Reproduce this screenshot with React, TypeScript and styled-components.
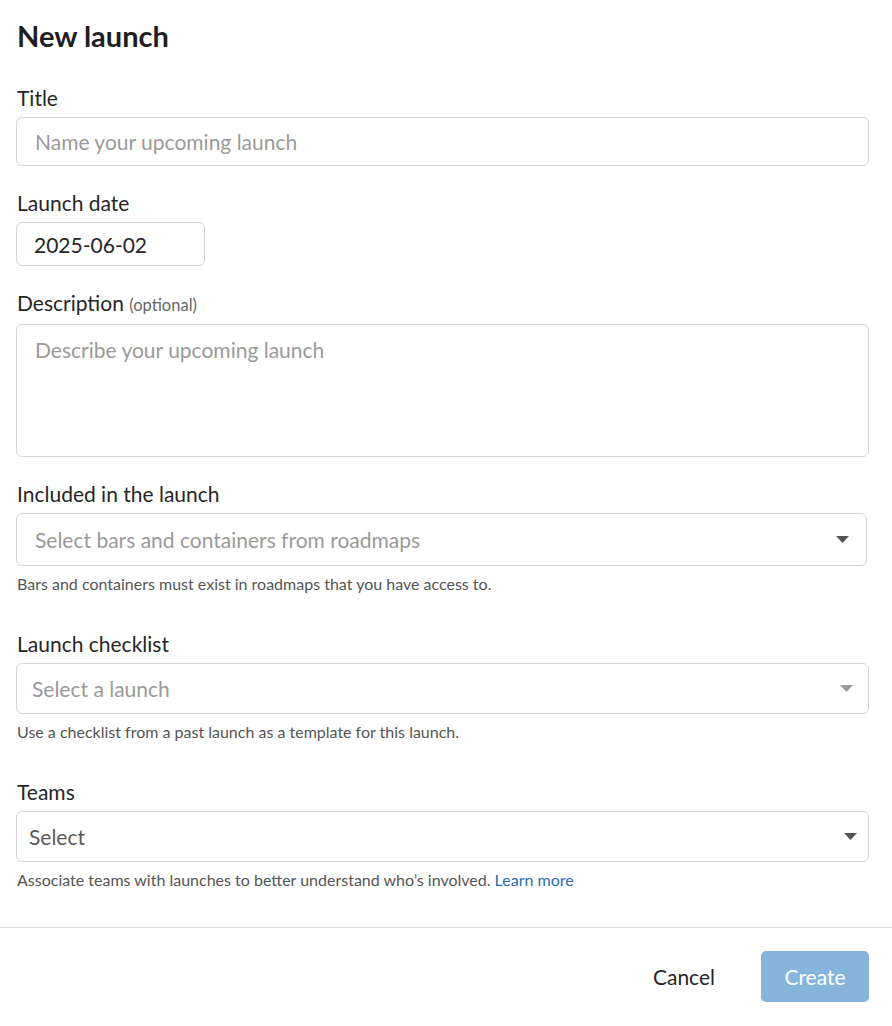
import styled, { createGlobalStyle } from "styled-components"

const GlobalStyle = createGlobalStyle`
  body {
    margin: 0;
    background: #fff;
    font-family: Lato, "Noto Sans", sans-serif;
    color: #262626;
  }
  * { box-sizing: border-box; }
`

function Caret({ light }: { light?: boolean }) {
    return (
        <svg width="13" height="7" viewBox="0 0 13 7">
            <path d="M0 0 L13 0 L6.5 7 Z" fill={light ? '#9a9a9a' : '#555'} />
        </svg>
    )
}

export default function App() {
    return (
        <>
            <GlobalStyle />
            <Page>
                <Form>
                    <Heading>New launch</Heading>
                    <Field>
                        <Label>Title</Label>
                        <TextInput placeholder="Name your upcoming launch" />
                    </Field>
                    <Field>
                        <Label>Launch date</Label>
                        <DateInput defaultValue="2025-06-02" />
                    </Field>
                    <Field>
                        <Label>Description <Optional>(optional)</Optional></Label>
                        <TextArea placeholder="Describe your upcoming launch" />
                    </Field>
                    <Field>
                        <Label>Included in the launch</Label>
                        <Select $height={53} $inset="calc(100% - 2px)" $padLeft={18} $padRight={17}>
                            <Placeholder>Select bars and containers from roadmaps</Placeholder>
                            <Caret />
                        </Select>
                        <Help>Bars and containers must exist in roadmaps that you have access to.</Help>
                    </Field>
                    <Field>
                        <Label>Launch checklist</Label>
                        <Select $height={51} $inset="100%" $padLeft={15} $padRight={15}>
                            <Placeholder>Select a launch</Placeholder>
                            <Caret light />
                        </Select>
                        <Help>Use a checklist from a past launch as a template for this launch.</Help>
                    </Field>
                    <Field>
                        <Label>Teams</Label>
                        <Select $height={51} $inset="100%" $padLeft={12} $padRight={11}>
                            <Placeholder $dark>Select</Placeholder>
                            <Caret />
                        </Select>
                        <Help>Associate teams with launches to better understand who’s involved. <HelpLink href="#">Learn more</HelpLink></Help>
                    </Field>
                </Form>
                <Footer>
                    <CancelButton>Cancel</CancelButton>
                    <CreateButton>Create</CreateButton>
                </Footer>
            </Page>
        </>
    )
}

const Page = styled.div`
    width: 892px;
    min-height: 1026px;
    display: flex;
    flex-direction: column;
`
const Form = styled.div`
    padding: 18px 23px 0 16px;
    display: flex;
    flex-direction: column;
    gap: 25px;
`
const Heading = styled.h1`
    margin: 0 0 7px 1px;
    font-size: 29px;
    font-weight: 700;
    line-height: 36px;
    color: #1f1f1f;
`
const Field = styled.div`
    display: flex;
    flex-direction: column;
`
const Label = styled.label`
    margin: 0 0 7px 1px;
    font-size: 21px;
    line-height: 24px;
    color: #262626;
`
const Optional = styled.span`
    font-size: 16.5px;
    color: #666;
`
const inputBase = `
    border: 1px solid #d6d6d6;
    border-radius: 6px;
    background: #fff;
    font-family: Lato, "Noto Sans", sans-serif;
    font-size: 21px;
    color: #262626;
    outline: none;
    &::placeholder { color: #9a9a9a; }
`
const TextInput = styled.input`
    ${inputBase}
    width: 100%;
    height: 49px;
    padding: 0 18px;
`
const DateInput = styled.input`
    ${inputBase}
    width: 189px;
    height: 44px;
    padding: 0 17px;
`
const TextArea = styled.textarea`
    ${inputBase}
    width: 100%;
    height: 133px;
    padding: 12px 18px;
    resize: none;
`
const Select = styled.div<{ $height: number; $inset: string; $padLeft: number; $padRight: number }>`
    height: ${p => p.$height}px;
    width: ${p => p.$inset};
    border: 1px solid #d6d6d6;
    border-radius: 6px;
    display: flex;
    align-items: center;
    justify-content: space-between;
    padding: 0 ${p => p.$padRight}px 0 ${p => p.$padLeft}px;
`
const Placeholder = styled.span<{ $dark?: boolean }>`
    font-size: 21px;
    color: ${p => p.$dark ? '#5a5a5a' : '#9a9a9a'};
`
const Help = styled.p`
    margin: 8px 0 13px 1px;
    font-size: 16px;
    line-height: 20px;
    color: #555;
`
const HelpLink = styled.a`
    color: #2a6db0;
    text-decoration: none;
`
const Footer = styled.div`
    margin-top: 24px;
    border-top: 1px solid #dcdcdc;
    padding: 23px 23px 0 0;
    display: flex;
    justify-content: flex-end;
    align-items: center;
    gap: 46px;
`
const CancelButton = styled.button`
    border: none;
    background: none;
    padding: 0;
    font-family: Lato, "Noto Sans", sans-serif;
    font-size: 21px;
    color: #262626;
`
const CreateButton = styled.button`
    width: 108px;
    height: 51px;
    border: none;
    border-radius: 5px;
    background: #85b5dd;
    color: #fff;
    font-family: Lato, "Noto Sans", sans-serif;
    font-size: 21px;
`
